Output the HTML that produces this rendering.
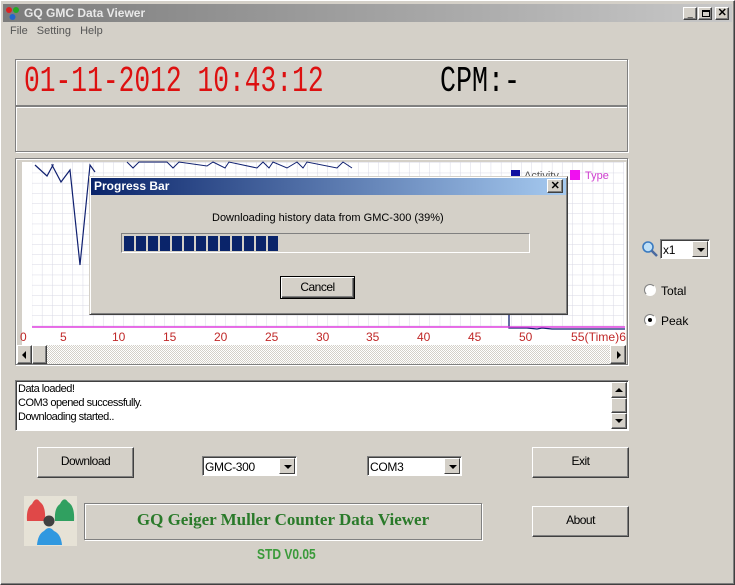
<!DOCTYPE html>
<html><head><meta charset="utf-8"><style>
*{margin:0;padding:0;box-sizing:border-box}
body{width:735px;height:585px;background:#d4d0c8;position:relative;overflow:hidden;font-family:"Liberation Sans",sans-serif;font-size:11px;color:#000}
.a{position:absolute}
.etch{border:1px solid #808080;box-shadow:1px 1px 0 #fff, inset 1px 1px 0 #fff}
.btn{position:absolute;background:#d4d0c8;border:1px solid;border-color:#fff #404040 #404040 #fff;box-shadow:inset -1px -1px 0 #808080;text-align:center;font-size:12px;letter-spacing:-0.5px}
.sunk{border:1px solid;border-color:#808080 #fff #fff #808080;box-shadow:inset 1px 1px 0 #404040}
.arr{position:absolute;width:16px;background:#d4d0c8;border:1px solid;border-color:#fff #404040 #404040 #fff}
.arr:after{content:"";position:absolute;left:4px;top:6px;border-left:4px solid transparent;border-right:4px solid transparent;border-top:4px solid #000}
.combo{position:absolute;background:#fff;height:20px;font-size:12px;padding:2px 2px;letter-spacing:-0.3px}
</style></head><body>
<div class="a" style="left:0;top:0;width:735px;height:585px;border:1px solid #fff;border-right-color:#404040;border-bottom-color:#404040;box-shadow:inset -1px -1px 0 #808080"></div>
<div class="a" style="left:3px;top:4px;width:729px;height:18px;background:linear-gradient(90deg,#7c7c7c,#a8a8a8 60%,#c8c8c8)"></div>
<svg class="a" style="left:5px;top:5px" width="16" height="16"><circle cx="4" cy="5" r="3" fill="#d22"/><circle cx="11" cy="5" r="3" fill="#2a2"/><circle cx="7.5" cy="12" r="3" fill="#26c"/></svg>
<div class="a" style="left:24px;top:6px;color:#e8e8e8;font-weight:bold;font-size:12px">GQ GMC Data Viewer</div>
<div class="btn" style="left:683px;top:7px;width:14px;height:13px;font-size:9px;line-height:10px">_</div>
<div class="btn" style="left:698px;top:7px;width:14px;height:13px"><div class="a" style="left:3px;top:2px;width:8px;height:7px;border:1px solid #000;border-top-width:2px"></div></div>
<div class="btn" style="left:715px;top:7px;width:14px;height:13px;font-size:11px;line-height:11px;font-weight:bold">✕</div>
<div class="a" style="left:10px;top:25px;color:#555;font-size:11px;word-spacing:6px">File Setting Help</div>

<div class="a etch" style="left:15px;top:59px;width:613px;height:47px"></div>
<div class="a etch" style="left:15px;top:106px;width:613px;height:46px"></div>
<div class="a" style="left:24px;top:61px;color:#dd1010;font-family:'Liberation Mono',monospace;font-size:36px;transform:scaleX(0.73);transform-origin:left;white-space:nowrap">01-11-2012 10:43:12</div>
<div class="a" style="left:440px;top:61px;color:#000;font-family:'Liberation Mono',monospace;font-size:36px;transform:scaleX(0.74);transform-origin:left">CPM:-</div>

<div class="a etch" style="left:15px;top:158px;width:613px;height:207px"></div>
<svg class="a" style="left:17px;top:160px" width="609" height="185">
<defs><pattern id="g" width="10.2" height="10.2" patternUnits="userSpaceOnUse" x="5" y="3"><path d="M10.2 0V10.2M0 10.2H10.2" stroke="#d8d8e4" stroke-width="1" fill="none"/></pattern></defs>
<rect x="5" y="2" width="604" height="183" fill="#fff"/>
<rect x="15" y="2" width="592" height="165" fill="url(#g)"/>
<polyline points="18,5 30,16 36,5 35,5 44,22 53,10 63,105 73,5 78,12" fill="none" stroke="#102070" stroke-width="1.2"/>
<polyline points="110,2 116,8 122,2 150,2 156,8 162,2 190,6 196,2 208,8 212,2 240,8 246,2 252,8 256,2 270,8 280,2 286,8 290,2 320,8 326,2 335,8" fill="none" stroke="#102070" stroke-width="1"/>
<polyline points="492,155 492,168 510,168 520,169 525,168 535,169 608,169" fill="none" stroke="#102070" stroke-width="1.3"/>
<line x1="15" y1="167" x2="608" y2="167" stroke="#e040e0" stroke-width="1.5"/>
<rect x="494" y="10" width="9" height="6" fill="#1010a0"/>
<text x="507" y="19" font-size="11" fill="#555" font-family="Liberation Sans">Activity</text>
<rect x="553" y="10" width="10" height="10" fill="#f010f0"/>
<text x="568" y="19" font-size="11" fill="#d040d0" font-family="Liberation Sans">Type</text>
<g fill="#c02828" font-size="12" font-family="Liberation Sans">
<text x="3" y="181">0</text><text x="43" y="181">5</text><text x="95" y="181">10</text><text x="146" y="181">15</text><text x="197" y="181">20</text><text x="248" y="181">25</text><text x="299" y="181">30</text><text x="349" y="181">35</text><text x="400" y="181">40</text><text x="451" y="181">45</text><text x="502" y="181">50</text><text x="554" y="181" textLength="55" lengthAdjust="spacingAndGlyphs">55(Time)6</text></g>
</svg>
<div class="a" style="left:17px;top:345px;width:609px;height:19px;background:repeating-conic-gradient(#fff 0 25%,#d4d0c8 0 50%) 0 0/2px 2px"></div>
<div class="btn" style="left:17px;top:345px;width:15px;height:19px"><div class="a" style="left:4px;top:5px;border-top:4px solid transparent;border-bottom:4px solid transparent;border-right:4px solid #000"></div></div>
<div class="btn" style="left:32px;top:345px;width:15px;height:19px"></div>
<div class="btn" style="left:610px;top:345px;width:16px;height:19px"><div class="a" style="left:6px;top:5px;border-top:4px solid transparent;border-bottom:4px solid transparent;border-left:4px solid #000"></div></div>

<div class="a" style="left:89px;top:176px;width:479px;height:139px;background:#d4d0c8;border:1px solid;border-color:#d4d0c8 #404040 #404040 #d4d0c8;box-shadow:inset 1px 1px 0 #fff,inset -1px -1px 0 #808080"></div>
<div class="a" style="left:91px;top:178px;width:475px;height:17px;background:linear-gradient(90deg,#0a246a,#a6caf0)"></div>
<div class="a" style="left:94px;top:179px;color:#fff;font-weight:bold;font-size:12px">Progress Bar</div>
<div class="btn" style="left:547px;top:179px;width:16px;height:14px;font-size:11px;line-height:12px;font-weight:bold">✕</div>
<div class="a" style="left:212px;top:212px;font-size:11px">Downloading history data from GMC-300 (39%)</div>
<div class="a" style="left:121px;top:233px;width:409px;height:20px;border:1px solid;border-color:#808080 #fff #fff #808080"></div>
<div class="a" style="left:124px;top:236px;width:155px;height:15px;background:repeating-linear-gradient(90deg,#0a246a 0 10px,transparent 10px 12px)"></div>
<div class="btn" style="left:280px;top:276px;width:75px;height:23px;border:1px solid #000;box-shadow:inset 1px 1px 0 #fff,inset -1px -1px 0 #404040,inset -2px -2px 0 #808080;line-height:20px">Cancel</div>

<svg class="a" style="left:641px;top:240px" width="18" height="18"><circle cx="7" cy="7" r="5" fill="#bfe0f8" stroke="#3a7ac0" stroke-width="1.6"/><line x1="10.5" y1="10.5" x2="16" y2="16" stroke="#4a6aa0" stroke-width="2.5"/></svg>
<div class="combo sunk" style="left:660px;top:239px;width:50px;padding-top:3px">x1</div>
<div class="arr" style="left:692px;top:241px;height:16px"></div>
<div class="a" style="left:644px;top:284px;width:12px;height:12px;border-radius:50%;background:#fff;border:1px solid;border-color:#808080 #fff #fff #808080"></div>
<div class="a" style="left:661px;top:284px;font-size:12px">Total</div>
<div class="a" style="left:644px;top:314px;width:12px;height:12px;border-radius:50%;background:#fff;border:1px solid;border-color:#808080 #fff #fff #808080"><div class="a" style="left:3px;top:3px;width:4px;height:4px;border-radius:50%;background:#000"></div></div>
<div class="a" style="left:661px;top:314px;font-size:12px">Peak</div>

<div class="a sunk" style="left:15px;top:380px;width:614px;height:51px;background:#fff"></div>
<div class="a" style="left:18px;top:382px;font-size:11px;line-height:14px;letter-spacing:-0.5px">Data loaded!<br>COM3 opened successfully.<br>Downloading started..</div>
<div class="a" style="left:611px;top:382px;width:16px;height:47px;background:repeating-conic-gradient(#fff 0 25%,#d4d0c8 0 50%) 0 0/2px 2px"></div>
<div class="btn" style="left:611px;top:382px;width:16px;height:16px"><div class="a" style="left:3px;top:5px;border-left:4px solid transparent;border-right:4px solid transparent;border-bottom:4px solid #000"></div></div>
<div class="btn" style="left:611px;top:398px;width:16px;height:15px"></div>
<div class="btn" style="left:611px;top:413px;width:16px;height:16px"><div class="a" style="left:3px;top:5px;border-left:4px solid transparent;border-right:4px solid transparent;border-top:4px solid #000"></div></div>

<div class="btn" style="left:37px;top:447px;width:97px;height:31px;line-height:27px">Download</div>
<div class="combo sunk" style="left:202px;top:456px;width:95px;padding-top:3px">GMC-300</div>
<div class="arr" style="left:279px;top:458px;height:16px"></div>
<div class="combo sunk" style="left:367px;top:456px;width:95px;padding-top:3px">COM3</div>
<div class="arr" style="left:444px;top:458px;height:16px"></div>
<div class="btn" style="left:532px;top:447px;width:97px;height:31px;line-height:27px">Exit</div>
<div class="btn" style="left:532px;top:506px;width:97px;height:31px;line-height:27px">About</div>

<svg class="a" style="left:24px;top:496px" width="54" height="50"><rect width="53" height="50" fill="#e6e2d6"/>
<path d="M3 25 Q2 12 8 8 Q12 0 16 6 Q22 10 21 25 Z" fill="#e04848"/>
<path d="M31 25 Q30 12 36 8 Q40 0 44 6 Q51 10 50 25 Z" fill="#30a060"/>
<circle cx="25" cy="25" r="5.5" fill="#404040"/>
<path d="M13 49 Q14 38 20 35 Q25 29 30 35 Q37 38 38 49 Z" fill="#3098e0"/></svg>
<div class="a etch" style="left:84px;top:503px;width:398px;height:37px"></div>
<div class="a" style="left:84px;top:510px;width:398px;text-align:center;color:#2a7a2a;font-family:'Liberation Serif',serif;font-weight:bold;font-size:17px">GQ Geiger Muller Counter Data Viewer</div>
<div class="a" style="left:257px;top:546px;color:#3a9a3a;font-weight:bold;font-size:15px;transform:scaleX(0.8);transform-origin:left">STD V0.05</div>
</body></html>
